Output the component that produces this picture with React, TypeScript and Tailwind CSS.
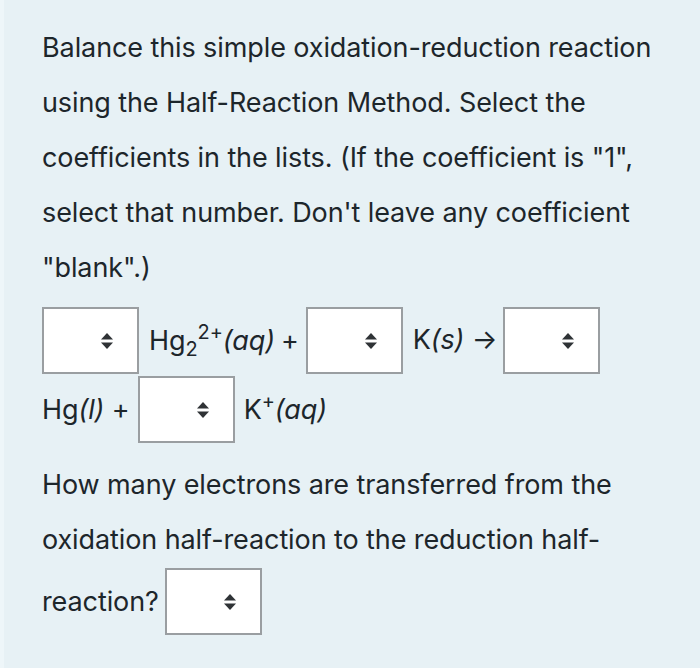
import React from 'react';

const SelectBox: React.FC = () => (
  <div className="relative w-[97px] h-[67px] bg-white border-2 border-[#9a9ea1] shrink-0">
    <svg
      className="absolute right-[24px] top-1/2 -translate-y-1/2"
      width="12"
      height="16"
      viewBox="0 0 12 16"
    >
      <path d="M6 0 L12 6.5 L0 6.5 Z" fill="#2f3336" />
      <path d="M0 9.5 L12 9.5 L6 16 Z" fill="#2f3336" />
    </svg>
  </div>
);

export default function App() {
  return (
    <div
      className="w-[700px] h-[668px] bg-[#e7f1f5] border-l-4 border-[#eef6f9] text-[#1d262b] overflow-hidden"
      style={{ fontFamily: 'Inter, "Noto Sans", sans-serif' }}
    >
      <div className="pl-[38px] pr-[30px] pt-[20px]">
        <p className="text-[27px] leading-[55px] tracking-[-0.1px]">
          Balance this simple oxidation-reduction reaction using the Half-Reaction Method. Select the
          coefficients in the lists. (If the coefficient is "1", select that number. Don't leave any
          coefficient "blank".)
        </p>

        <div className="mt-[12px] flex flex-wrap items-center gap-y-[2px] text-[27px] tracking-[-0.1px] w-[620px]">
          <SelectBox />
          <span className="ml-[10px] mr-[7px] flex items-center leading-none">
            Hg
            <span className="text-[20px] relative top-[8px]">2</span>
            <span className="text-[20px] relative -top-[9px]">2+</span>
            <i>(aq)</i>
            <span className="ml-[6px]">+</span>
          </span>
          <SelectBox />
          <span className="ml-[10px] mr-[6px]">
            K<i>(s)</i> →
          </span>
          <SelectBox />
          <span className="mr-[8px] leading-none">
            Hg<i>(l)</i> +
          </span>
          <SelectBox />
          <span className="ml-[9px] flex items-center leading-none">
            K
            <span className="text-[20px] relative -top-[9px]">+</span>
            <i>(aq)</i>
          </span>
        </div>

        <div className="mt-[14px] text-[27px] leading-[55px] tracking-[-0.1px] w-[625px]">
          <p>How many electrons are transferred from the oxidation half-reaction to the reduction half-</p>
          <div className="flex items-center mt-[1px]">
            <span className="mr-[6px]">reaction?</span>
            <SelectBox />
          </div>
        </div>
      </div>
    </div>
  );
}
